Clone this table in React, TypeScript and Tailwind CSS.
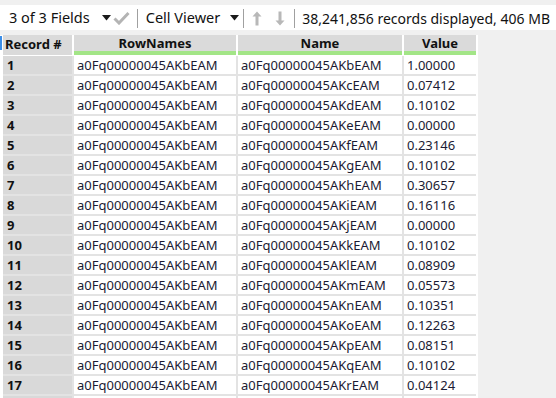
const rows: [string, string][] = [
  ["b", "1.00000"],
  ["c", "0.07412"],
  ["d", "0.10102"],
  ["e", "0.00000"],
  ["f", "0.23146"],
  ["g", "0.10102"],
  ["h", "0.30657"],
  ["i", "0.16116"],
  ["j", "0.00000"],
  ["k", "0.10102"],
  ["l", "0.08909"],
  ["m", "0.05573"],
  ["n", "0.10351"],
  ["o", "0.12263"],
  ["p", "0.08151"],
  ["q", "0.10102"],
  ["r", "0.04124"],
];

function Caret() {
  return (
    <svg width="9" height="6" viewBox="0 0 9 6" className="shrink-0">
      <path d="M0 0h9L4.5 5.5z" fill="#1a1a1a" />
    </svg>
  );
}

function Check() {
  return (
    <svg width="17" height="14" viewBox="0 0 17 14" className="shrink-0">
      <path d="M1.5 7.5l4.5 4.5L15.5 2" fill="none" stroke="#b4b4b4" strokeWidth="3" />
    </svg>
  );
}

function Arrow({ down }: { down?: boolean }) {
  return (
    <svg width="10" height="15" viewBox="0 0 10 15" className={down ? "rotate-180 shrink-0" : "shrink-0"}>
      <path d="M5 0.5L9.5 5.5H6.5V14.5H3.5V5.5H0.5z" fill="#b8b8b8" />
    </svg>
  );
}

function Sep() {
  return <div className="h-[19px] w-px shrink-0 bg-[#a0a0a0]" />;
}

export default function App() {
  return (
    <div className="h-[398px] w-[556px] overflow-hidden bg-[#f0f0f0] text-[#111] [font-family:'Noto_Sans',sans-serif]">
      <div className="mt-[5px] flex h-[25px] items-center whitespace-nowrap bg-white pt-px text-[14.5px] *:shrink-0">
        <span className="ml-[9px]">3 of 3 Fields</span>
        <span className="ml-[12px]">
          <Caret />
        </span>
        <span className="ml-[2px]">
          <Check />
        </span>
        <div className="ml-[7px]">
          <Sep />
        </div>
        <span className="ml-[8px]">Cell Viewer</span>
        <span className="ml-[10px]">
          <Caret />
        </span>
        <div className="ml-[4px]">
          <Sep />
        </div>
        <span className="ml-[8px]">
          <Arrow />
        </span>
        <span className="ml-[13px]">
          <Arrow down />
        </span>
        <div className="ml-[9px]">
          <Sep />
        </div>
        <span className="ml-[7px] text-[14px]">38,241,856 records displayed, 406 MB</span>
      </div>

      <div className="relative mt-[5px] w-[478px] bg-white pl-[3px] pr-[2px] text-[13px]">
        <div className="absolute left-0 top-[1px] h-[14px] w-[2px] bg-[#3b8ee8]" />
        <div className="grid grid-cols-[69px_162px_164px_72px] gap-x-[2px] font-bold">
          <div className="h-[20px] bg-[#dadada] pl-[2px] leading-[18px]">Record #</div>
          <div className="h-[20px] border-b-[4px] border-[#a3e587] bg-[#dadada] text-center leading-[17px]">RowNames</div>
          <div className="h-[20px] border-b-[4px] border-[#a3e587] bg-[#dadada] text-center leading-[17px]">Name</div>
          <div className="h-[20px] border-b-[4px] border-[#a3e587] bg-[#dadada] text-center leading-[17px]">Value</div>
        </div>
        <div className="mt-px grid grid-cols-[69px_162px_164px_72px] gap-x-[2px] gap-y-[2px] bg-[#e3e3e3]">
          {rows.map(([letter, value], i) => (
            <div key={i} className="contents">
              <div className="h-[18px] bg-[#d9d9d9] pl-[4px] font-bold leading-[18px]">{i + 1}</div>
              <div className="h-[18px] bg-white pl-[3px] leading-[18px] text-[#1b1b33]">a0Fq00000045AKbEAM</div>
              <div className="h-[18px] bg-white pl-[3px] leading-[18px] text-[#1b1b33]">a0Fq00000045AK{letter}EAM</div>
              <div className="h-[18px] bg-white pl-[3px] leading-[18px] text-[#1b1b33]">{value}</div>
            </div>
          ))}
          <div className="h-[18px] bg-[#d9d9d9]" />
          <div className="h-[18px] bg-white" />
          <div className="h-[18px] bg-white" />
          <div className="h-[18px] bg-white" />
        </div>
      </div>
    </div>
  );
}
